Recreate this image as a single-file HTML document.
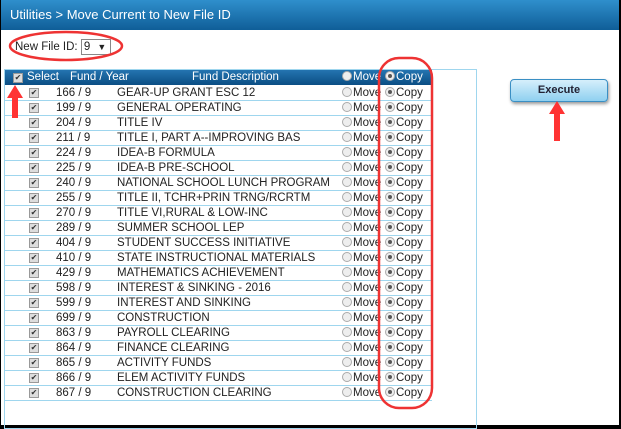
<!DOCTYPE html>
<html><head><style>
body{margin:0;width:621px;height:426px;overflow:hidden;font-family:"Liberation Sans",sans-serif;background:#000;position:relative}
#pg{position:absolute;left:1px;top:0;width:618px;height:425px;background:#fff}
#hd{position:absolute;left:0;top:0;width:618px;height:30px;background:linear-gradient(#2f8fcc,#0f5e98);color:#fff;font-size:13px;line-height:30px;padding-left:9px;box-sizing:border-box}
.ab{position:absolute}
#box{left:3px;top:69px;width:473px;height:360px;border:1px solid #9fd6ee;box-sizing:border-box}
.row{position:absolute;left:4px;width:427px;height:15px;border-bottom:1px solid #9fd6ee;font-size:11.5px;color:#222;box-sizing:border-box;line-height:14px}
.row span,.th span{position:absolute;white-space:nowrap}
.th{position:absolute;left:4px;top:70px;width:427px;height:15px;background:linear-gradient(#2474b0,#0b4e84);color:#fff;font-size:11.5px;line-height:15px}
.cb{display:inline-block;width:8px;height:8px;border:1px solid #999;background:#ddd;font-size:8px;line-height:8px;text-align:center;color:#333}
i.rd{display:inline-block;width:8px;height:8px;border:1px solid #aaa;border-radius:50%;background:#eee;vertical-align:-1px;position:relative;margin-right:1px}
i.rd.on::after{content:"";position:absolute;left:2px;top:2px;width:4px;height:4px;border-radius:50%;background:#555}
</style></head><body><div id="pg">
<div id="hd">Utilities &gt; Move Current to New File ID</div>
<div class="ab" style="left:14px;top:39px;font-size:11.5px;color:#222">New File ID: <span style="display:inline-block;border:1px solid #888;width:26px;height:14px;line-height:14px;padding-left:2px;vertical-align:middle">9 <span style="font-size:9px;margin-left:4px">▼</span></span></div>
<div class="ab" id="box"></div>
<div class="th"><span style="left:8px;top:3px" class="cb">✔</span><span style="left:22px">Select</span><span style="left:65px">Fund / Year</span><span style="left:187px">Fund Description</span><span style="left:337px"><i class="rd"></i>Move</span><span style="left:380px"><i class="rd on"></i>Copy</span></div>
<div id="rows"></div>
<div class="ab" style="left:509px;top:79px;width:96px;height:21px;border:1px solid #3a8fc4;border-radius:4px;background:linear-gradient(#d6effb,#8fd0f0);box-shadow:1px 2px 3px #999;font-size:11px;font-weight:bold;text-align:center;line-height:21px;color:#223">Execute</div>
<svg class="ab" style="left:0;top:0" width="621" height="426">
<ellipse cx="65" cy="46" rx="56" ry="14" fill="none" stroke="#e33" stroke-width="2.5"/>
<rect x="378" y="58" width="53" height="350" rx="20" fill="none" stroke="#e33" stroke-width="2.5"/>
<path d="M14 85 L6 98 L11 98 L11 118 L17 118 L17 98 L22 98 Z" fill="#f33"/>
<path d="M556 101 L548 114 L553 114 L553 141 L559 141 L559 114 L564 114 Z" fill="#f33"/>
</svg>
</div>
<script>
var d=[["166","GEAR-UP GRANT ESC 12"],["199","GENERAL OPERATING"],["204","TITLE IV"],["211","TITLE I, PART A--IMPROVING BAS"],["224","IDEA-B FORMULA"],["225","IDEA-B PRE-SCHOOL"],["240","NATIONAL SCHOOL LUNCH PROGRAM"],["255","TITLE II, TCHR+PRIN TRNG/RCRTM"],["270","TITLE VI,RURAL & LOW-INC"],["289","SUMMER SCHOOL LEP"],["404","STUDENT SUCCESS INITIATIVE"],["410","STATE INSTRUCTIONAL MATERIALS"],["429","MATHEMATICS ACHIEVEMENT"],["598","INTEREST & SINKING - 2016"],["599","INTEREST AND SINKING"],["699","CONSTRUCTION"],["863","PAYROLL CLEARING"],["864","FINANCE CLEARING"],["865","ACTIVITY FUNDS"],["866","ELEM ACTIVITY FUNDS"],["867","CONSTRUCTION CLEARING"]];
var h="";d.forEach(function(r,i){h+='<div class="row" style="top:'+(86+i*15)+'px"><span class="cb" style="left:24px;top:2px">✔</span><span style="left:51px">'+r[0]+' / 9</span><span style="left:112px">'+r[1]+'</span><span style="left:337px"><i class="rd"></i>Move</span><span style="left:380px"><i class="rd on"></i>Copy</span></div>'});
document.getElementById("rows").innerHTML=h;
</script>
</body></html>
